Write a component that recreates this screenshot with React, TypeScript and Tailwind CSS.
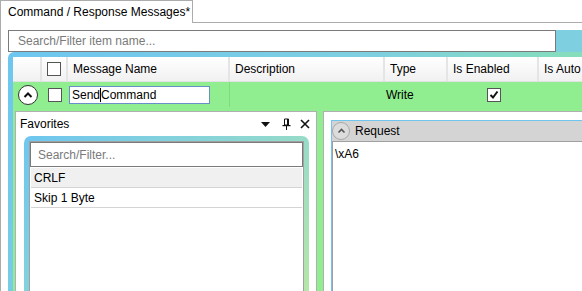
import React from "react";

function ExpanderCircle() {
  return (
    <div className="w-[20px] h-[20px] rounded-full border-[1.5px] border-[#333] bg-white flex items-center justify-center">
      <svg width="10" height="8" viewBox="0 0 10 8">
        <path d="M1.5 6 L5 2.5 L8.5 6" stroke="#111" strokeWidth="2" fill="none" />
      </svg>
    </div>
  );
}

function CheckBox({ checked }: { checked?: boolean }) {
  return (
    <div className="w-[14px] h-[14px] border border-[#555] bg-white flex items-center justify-center">
      {checked && (
        <svg width="10" height="10" viewBox="0 0 10 10">
          <path d="M1.5 5 L4 7.5 L8.5 1.5" stroke="#111" strokeWidth="2" fill="none" />
        </svg>
      )}
    </div>
  );
}

function PinIcon() {
  return (
    <svg width="9" height="12" viewBox="0 0 9 12">
      <path d="M2.5 1 H6.5 V7 H2.5 Z" stroke="#111" strokeWidth="1" fill="none" />
      <rect x="5" y="1" width="2" height="6" fill="#111" />
      <rect x="0.5" y="7" width="8" height="1.2" fill="#111" />
      <rect x="4" y="8" width="1" height="4" fill="#111" />
    </svg>
  );
}

const headerCols = [
  { label: "", w: "w-[26px]", check: true },
  { label: "Message Name", w: "w-[162px]" },
  { label: "Description", w: "w-[155px]" },
  { label: "Type", w: "w-[63px]" },
  { label: "Is Enabled", w: "w-[91px]" },
  { label: "Is Auto", w: "flex-1" },
];

export default function App() {
  return (
    <div
      className="w-[582px] h-[291px] overflow-hidden bg-white flex flex-col text-[12px] text-black"
      style={{ fontFamily: '"Liberation Sans", Arial, sans-serif' }}
    >
      {/* tab strip */}
      <div className="h-[23px] flex shrink-0">
        <div className="w-[193px] border border-b-0 border-[#acacac] pl-[7px] pt-[3px] leading-[16px]">
          Command / Response Messages*
        </div>
        <div className="flex-1 border-b border-[#acacac]" />
      </div>

      <div className="flex-1 flex flex-col border-l border-[#acacac] min-h-0">
        {/* search row */}
        <div className="mt-[7px] h-[22px] flex shrink-0">
          <div className="ml-[7px] w-[548px] border border-[#7a7a7a] pl-[9px] flex items-center text-[#7a7a7a]">
            Search/Filter item name...
          </div>
          <div className="flex-1 bg-[#7ecfe0]" />
        </div>

        {/* grid frame */}
        <div className="flex-1 ml-[7px] rounded-tl-[6px] bg-[linear-gradient(135deg,#6ec6f0_0%,#7ecfe0_45%,#90ee90_100%)] pl-[5px] pt-[5px] flex flex-col min-h-0">
          {/* header */}
          <div className="h-[25px] flex shrink-0 bg-[linear-gradient(#ffffff,#f1f1f1)] border-b border-[#e2e2e2]">
            <div className="w-[29px] border-r-2 border-[#e5e5e5]" />
            {headerCols.map((c, i) => (
              <div
                key={i}
                className={`${c.w} ${i < headerCols.length - 1 ? "border-r-2 border-[#e5e5e5]" : ""} flex items-center ${c.check ? "justify-center" : "pl-[5px]"}`}
              >
                {c.check ? <CheckBox /> : c.label}
              </div>
            ))}
          </div>

          {/* data row */}
          <div className="h-[25px] flex shrink-0 bg-[#90ee90] items-center">
            <div className="w-[29px] flex justify-center pl-[1px]">
              <ExpanderCircle />
            </div>
            <div className="w-[26px] flex justify-center">
              <CheckBox />
            </div>
            <div className="w-[162px] h-full flex items-center pl-[1px] border-r border-[#84d884]">
              <div className="w-[141px] h-[18px] bg-white border border-[#6a8fc8] flex items-center pl-[2px]">
                Send
                <span className="inline-block w-[1px] h-[14px] bg-black" />
                Command
              </div>
            </div>
            <div className="w-[155px]" />
            <div className="w-[63px] pl-[1px]">Write</div>
            <div className="w-[91px] flex justify-center">
              <CheckBox checked />
            </div>
            <div className="flex-1" />
          </div>

          {/* details */}
          <div className="flex-1 bg-[#90ee90] pl-[2px] pt-[4px] flex gap-[6px] min-h-0">
            {/* favorites */}
            <div className="w-[302px] bg-white border border-[#b0b0b0] border-b-0 flex flex-col">
              <div className="h-[24px] flex items-center pl-[4px] pr-[6px] shrink-0">
                <span className="flex-1">Favorites</span>
                <svg width="9" height="5" viewBox="0 0 9 5" className="mr-[12px]">
                  <path d="M0 0 H9 L4.5 5 Z" fill="#111" />
                </svg>
                <span className="mr-[9px] flex">
                  <PinIcon />
                </span>
                <svg width="10" height="10" viewBox="0 0 10 10">
                  <path d="M1 1 L9 9 M9 1 L1 9" stroke="#111" strokeWidth="1.6" />
                </svg>
              </div>
              <div className="ml-[8px] w-[285px] flex-1 rounded-t-[7px] bg-[linear-gradient(135deg,#6ec6f0_0%,#8fd8d0_55%,#b6e6a8_100%)] pt-[5px] px-[5px] flex flex-col">
                <div className="flex-1 bg-white border border-[#a0a0a0] border-b-0 flex flex-col">
                  <div className="h-[25px] border border-[#7a7a7a] pl-[7px] flex items-center text-[#7a7a7a] shrink-0">
                    Search/Filter...
                  </div>
                  <div className="mx-[1px] mt-[1px] h-[20px] bg-[#f0f0f0] border-b border-[#d4d4d4] flex items-center pl-[3px]">
                    CRLF
                  </div>
                  <div className="mx-[1px] h-[20px] border-b border-[#d4d4d4] flex items-center pl-[3px]">
                    Skip 1 Byte
                  </div>
                </div>
              </div>
            </div>

            {/* request panel */}
            <div className="flex-1 bg-white border-l border-t border-[#b0b0b0] pl-[7px] pt-[8px] flex flex-col">
              <div className="flex-1 border-l border-t border-[#6ec6f0] flex flex-col">
                <div className="h-[21px] bg-[#d4d4d4] border-b border-[#a0a0a0] flex items-center shrink-0">
                  <div className="w-[18px] h-[18px] rounded-full border border-[#a8a8a8] bg-[#dcdcdc] flex items-center justify-center">
                    <svg width="9" height="6" viewBox="0 0 9 6">
                      <path d="M1.5 4.5 L4.5 1.5 L7.5 4.5" stroke="#555" strokeWidth="1.6" fill="none" />
                    </svg>
                  </div>
                  <span className="ml-[5px]">Request</span>
                </div>
                <div className="flex-1 border-l border-[#a0a0a0] pl-[2px] pt-[3px]">\xA6</div>
              </div>
            </div>
          </div>
        </div>
      </div>
    </div>
  );
}
